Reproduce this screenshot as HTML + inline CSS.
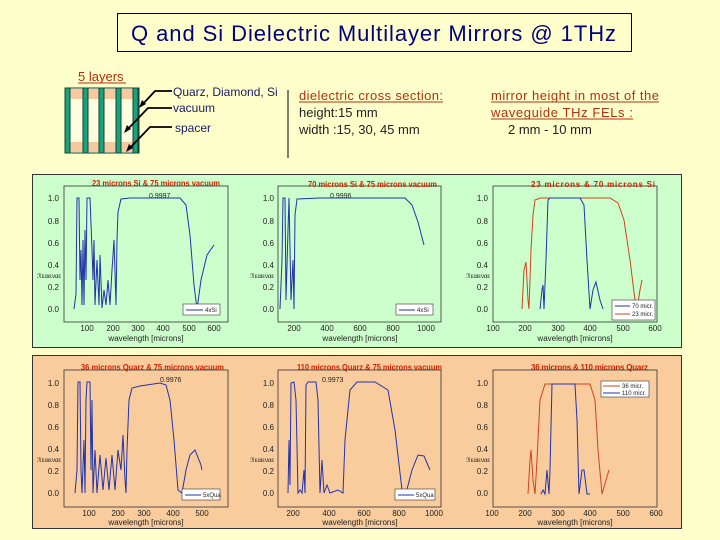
<!DOCTYPE html>
<html><head><meta charset="utf-8"><style>
html,body{margin:0;padding:0;background:#ffffcc;}
svg{display:block;font-family:"Liberation Sans",sans-serif;}
</style></head><body>
<svg width="720" height="540" viewBox="0 0 720 540" xmlns="http://www.w3.org/2000/svg">
<rect width="720" height="540" fill="#ffffcc"/>
<rect x="117.5" y="13.5" width="514" height="38" fill="none" stroke="#000" stroke-width="1"/>
<text x="131" y="41" font-size="22" textLength="485" lengthAdjust="spacing" fill="#000080">Q and Si Dielectric Multilayer Mirrors @ 1THz</text>
<text x="78" y="81" font-size="13" fill="#b03010">5 layers</text>
<line x1="78" y1="83" x2="126" y2="83" stroke="#b03010" stroke-width="1"/>
<rect x="65" y="88" width="74" height="65" fill="#fffde0" stroke="#114433"/>
<g fill="#f8c8a0">
<rect x="70" y="89" width="13" height="10"/><rect x="88" y="89" width="11" height="10"/><rect x="104" y="89" width="12" height="10"/><rect x="121" y="89" width="12" height="10"/>
<rect x="70" y="142" width="13" height="10"/><rect x="88" y="142" width="11" height="10"/><rect x="104" y="142" width="12" height="10"/><rect x="121" y="142" width="12" height="10"/>
</g>
<g fill="#1aa37a" stroke="#114433" stroke-width="1">
<rect x="65" y="88" width="5" height="65"/><rect x="83" y="88" width="5" height="65"/><rect x="99" y="88" width="5" height="65"/><rect x="116" y="88" width="5" height="65"/><rect x="133" y="88" width="5" height="65"/>
</g>
<g stroke="#000" stroke-width="1.8" fill="none">
<polyline points="172,91 155,91 142,105"/>
<polyline points="172,108 148,108 126,131"/>
<polyline points="172,127 150,127 128,150"/>
</g>
<g fill="#000"><polygon points="139,108 142,100 146,104"/><polygon points="124,133 127,125 131,129"/><polygon points="126,152 129,144 133,148"/></g>
<text x="173" y="96" font-size="12" fill="#1a1a66">Quarz, Diamond, Si</text>
<text x="173" y="112" font-size="12" fill="#1a1a66">vacuum</text>
<text x="175" y="132" font-size="12" fill="#1a1a66">spacer</text>
<line x1="288" y1="90" x2="288" y2="158" stroke="#000"/>
<g font-size="13">
<text x="299" y="100" fill="#b03010" textLength="144" lengthAdjust="spacing">dielectric cross section:</text>
<line x1="299" y1="102" x2="443" y2="102" stroke="#b03010"/>
<text x="299" y="117" fill="#222">height:15 mm</text>
<text x="299" y="134" fill="#222">width  :15, 30, 45 mm</text>
<text x="491" y="100" fill="#b03010" textLength="168" lengthAdjust="spacing">mirror height in most of the</text>
<line x1="491" y1="102" x2="659" y2="102" stroke="#b03010"/>
<text x="491" y="117" fill="#b03010" textLength="142" lengthAdjust="spacing">waveguide THz FELs :</text>
<line x1="491" y1="119" x2="633" y2="119" stroke="#b03010"/>
<text x="508" y="134" fill="#222">2 mm  - 10 mm</text>
</g>
<rect x="32.5" y="174.5" width="649" height="173" fill="#ccffcc" stroke="#333"/>
<rect x="32.5" y="355.5" width="649" height="173" fill="#f9cc9e" stroke="#333"/>
<g fill="none" stroke="#333" stroke-width="0.8">
<rect x="64" y="186" width="164" height="136"/><rect x="278" y="186" width="163" height="136"/><rect x="493" y="186" width="164" height="136"/>
<rect x="64" y="370" width="164" height="137"/><rect x="278" y="370" width="163" height="137"/><rect x="493" y="370" width="164" height="137"/>
</g>
<g font-size="8" fill="#cc2200" font-weight="bold">
<text x="92" y="186" textLength="128" lengthAdjust="spacingAndGlyphs">23 microns Si &amp; 75 microns vacuum</text>
<text x="308" y="187" textLength="129" lengthAdjust="spacingAndGlyphs">70 microns Si &amp; 75 microns vacuum</text>
<text x="531" y="187" textLength="124" lengthAdjust="spacing">23 microns &amp; 70 microns Si</text>
<text x="81" y="370" textLength="143" lengthAdjust="spacingAndGlyphs">36 microns Quarz &amp; 75 microns vacuum</text>
<text x="297" y="370" textLength="145" lengthAdjust="spacingAndGlyphs">110 microns Quarz &amp; 75 microns vacuum</text>
<text x="531" y="370" textLength="117" lengthAdjust="spacing">36 microns &amp; 110 microns Quarz</text>
</g>
<g font-size="8" fill="#222" text-anchor="end">
<text x="59" y="201">1.0</text><text x="59" y="224">0.8</text><text x="59" y="246">0.6</text><text x="59" y="268">0.4</text><text x="59" y="290">0.2</text><text x="59" y="312">0.0</text>
<text x="274" y="201">1.0</text><text x="274" y="224">0.8</text><text x="274" y="246">0.6</text><text x="274" y="268">0.4</text><text x="274" y="290">0.2</text><text x="274" y="312">0.0</text>
<text x="488" y="201">1.0</text><text x="488" y="224">0.8</text><text x="488" y="246">0.6</text><text x="488" y="268">0.4</text><text x="488" y="290">0.2</text><text x="488" y="312">0.0</text>
<text x="59" y="386">1.0</text><text x="59" y="408">0.8</text><text x="59" y="430">0.6</text><text x="59" y="452">0.4</text><text x="59" y="474">0.2</text><text x="59" y="496">0.0</text>
<text x="274" y="386">1.0</text><text x="274" y="408">0.8</text><text x="274" y="430">0.6</text><text x="274" y="452">0.4</text><text x="274" y="474">0.2</text><text x="274" y="496">0.0</text>
<text x="488" y="386">1.0</text><text x="488" y="408">0.8</text><text x="488" y="430">0.6</text><text x="488" y="452">0.4</text><text x="488" y="474">0.2</text><text x="488" y="496">0.0</text>
</g>
<g font-size="6" fill="#222">
<text x="37" y="278">ℛεαιεναε</text><text x="250" y="278">ℛεαιεναε</text><text x="466" y="278">ℛεαιεναε</text>
<text x="37" y="462">ℛεαιεναε</text><text x="250" y="462">ℛεαιεναε</text><text x="466" y="462">ℛεαιεναε</text>
</g>
<g font-size="8" fill="#222" text-anchor="middle">
<text x="87" y="331">100</text><text x="113" y="331">200</text><text x="138" y="331">300</text><text x="163" y="331">400</text><text x="189" y="331">500</text><text x="214" y="331">600</text>
<text x="294" y="331">200</text><text x="327" y="331">400</text><text x="360" y="331">600</text><text x="393" y="331">800</text><text x="426" y="331">1000</text>
<text x="493" y="331">100</text><text x="525" y="331">200</text><text x="558" y="331">300</text><text x="590" y="331">400</text><text x="623" y="331">500</text><text x="655" y="331">600</text>
<text x="89" y="516">100</text><text x="118" y="516">200</text><text x="144" y="516">300</text><text x="173" y="516">400</text><text x="202" y="516">500</text>
<text x="293" y="516">200</text><text x="329" y="516">400</text><text x="364" y="516">600</text><text x="399" y="516">800</text><text x="434" y="516">1000</text>
<text x="492" y="516">100</text><text x="525" y="516">200</text><text x="558" y="516">300</text><text x="590" y="516">400</text><text x="623" y="516">500</text><text x="656" y="516">600</text>
<text x="146" y="341">wavelength [microns]</text><text x="360" y="341">wavelength [microns]</text><text x="575" y="341">wavelength [microns]</text>
<text x="146" y="525">wavelength [microns]</text><text x="360" y="525">wavelength [microns]</text><text x="575" y="525">wavelength [microns]</text>
</g>
<g font-size="7" fill="#222">
<text x="149" y="198">0.9997</text><text x="330" y="198">0.9996</text>
<text x="160" y="382">0.9976</text><text x="322" y="382">0.9973</text>
</g>
<g fill="none" stroke-width="1">
<path stroke="#2233aa" d="M74,309 L76,294 L77,198 L79,198 L80,280 L81,250 L82,305 L83,240 L84,305 L85,230 L86,280 L87,198 L90,198 L92,250 L93,280 L94,240 L95,305 L97,260 L99,305 L100,255 L102,308 L104,290 L106,305 L108,280 L110,305 L112,270 L114,240 L116,305 L117,240 L118,212 L121,199 L130,198 L180,198 L186,205 L190,235 L194,285 L197,309 L201,280 L207,255 L214,245"/>
<path stroke="#2233aa" d="M280,309 L282,260 L283,198 L285,198 L286,300 L288,230 L289,198 L291,300 L293,260 L294,309 L295,215 L297,199 L320,198 L405,198 L412,205 L418,222 L424,245"/>
<path stroke="#cc4422" d="M522,309 L524,270 L526,262 L528,300 L529,309 L531,250 L533,215 L535,200 L540,198 L610,198 L618,203 L624,220 L630,260 L635,300 L637,309 L640,290 L642,280"/>
<path stroke="#2233aa" d="M540,309 L542,290 L543,285 L544,309 L546,260 L548,200 L550,198 L580,198 L584,205 L587,260 L590,309 L593,290 L596,282 L600,300 L603,309"/>
<path stroke="#2233aa" d="M75,493 L77,470 L78,382 L80,382 L81,470 L82,493 L84,440 L85,493 L86,400 L87,382 L90,382 L91,470 L92,400 L93,493 L95,450 L97,493 L100,455 L103,490 L106,458 L109,490 L112,455 L115,490 L118,450 L121,470 L123,435 L125,480 L126,493 L127,450 L129,400 L132,388 L140,386 L160,383 L166,385 L170,400 L174,440 L178,490 L182,493 L186,470 L190,455 L195,450 L201,465 L202,470"/>
<path stroke="#2233aa" d="M288,493 L289,440 L290,485 L291,383 L294,382 L296,400 L298,493 L300,490 L302,493 L304,470 L305,493 L306,385 L308,382 L316,382 L318,400 L320,493 L322,460 L324,493 L327,485 L330,493 L338,490 L343,493 L345,440 L350,390 L357,382 L375,382 L388,390 L395,430 L402,490 L406,493 L412,470 L418,455 L424,456 L430,470"/>
<path stroke="#cc4422" d="M528,494 L530,460 L531,450 L533,480 L535,494 L537,460 L540,400 L545,384 L590,384 L595,400 L598,450 L602,494 L606,480 L609,470"/>
<path stroke="#2233aa" d="M541,494 L543,490 L545,494 L547,470 L549,494 L550,470 L552,384 L575,384 L577,420 L579,494 L582,470 L584,470 L587,494 L590,494"/>
</g>
<g font-size="6" fill="#222">
<rect x="183" y="304" width="37" height="11" fill="#fff" stroke="#333" stroke-width="0.6"/><line x1="186" y1="310" x2="203" y2="310" stroke="#2233aa"/><text x="205" y="312">4xSi</text>
<rect x="396" y="304" width="37" height="11" fill="#fff" stroke="#333" stroke-width="0.6"/><line x1="399" y1="310" x2="415" y2="310" stroke="#2233aa"/><text x="417" y="312">4xSi</text>
<rect x="612" y="300" width="43" height="20" fill="#fff" stroke="#333" stroke-width="0.6"/><line x1="615" y1="306" x2="630" y2="306" stroke="#2233aa"/><text x="632" y="308">70 micr.</text><line x1="615" y1="314" x2="630" y2="314" stroke="#cc4422"/><text x="632" y="316">23 micr.</text>
<rect x="182" y="489" width="38" height="11" fill="#fff" stroke="#333" stroke-width="0.6"/><line x1="185" y1="495" x2="201" y2="495" stroke="#2233aa"/><text x="203" y="497">5xQua</text>
<rect x="395" y="489" width="40" height="11" fill="#fff" stroke="#333" stroke-width="0.6"/><line x1="398" y1="495" x2="414" y2="495" stroke="#2233aa"/><text x="416" y="497">5xQua</text>
<rect x="601" y="381" width="48" height="16" fill="#fff" stroke="#333" stroke-width="0.6"/><line x1="603" y1="386" x2="620" y2="386" stroke="#cc4422"/><text x="622" y="388">36 micr.</text><line x1="603" y1="393" x2="620" y2="393" stroke="#2233aa"/><text x="622" y="395">110 micr.</text>
</g>
</svg>
</body></html>
